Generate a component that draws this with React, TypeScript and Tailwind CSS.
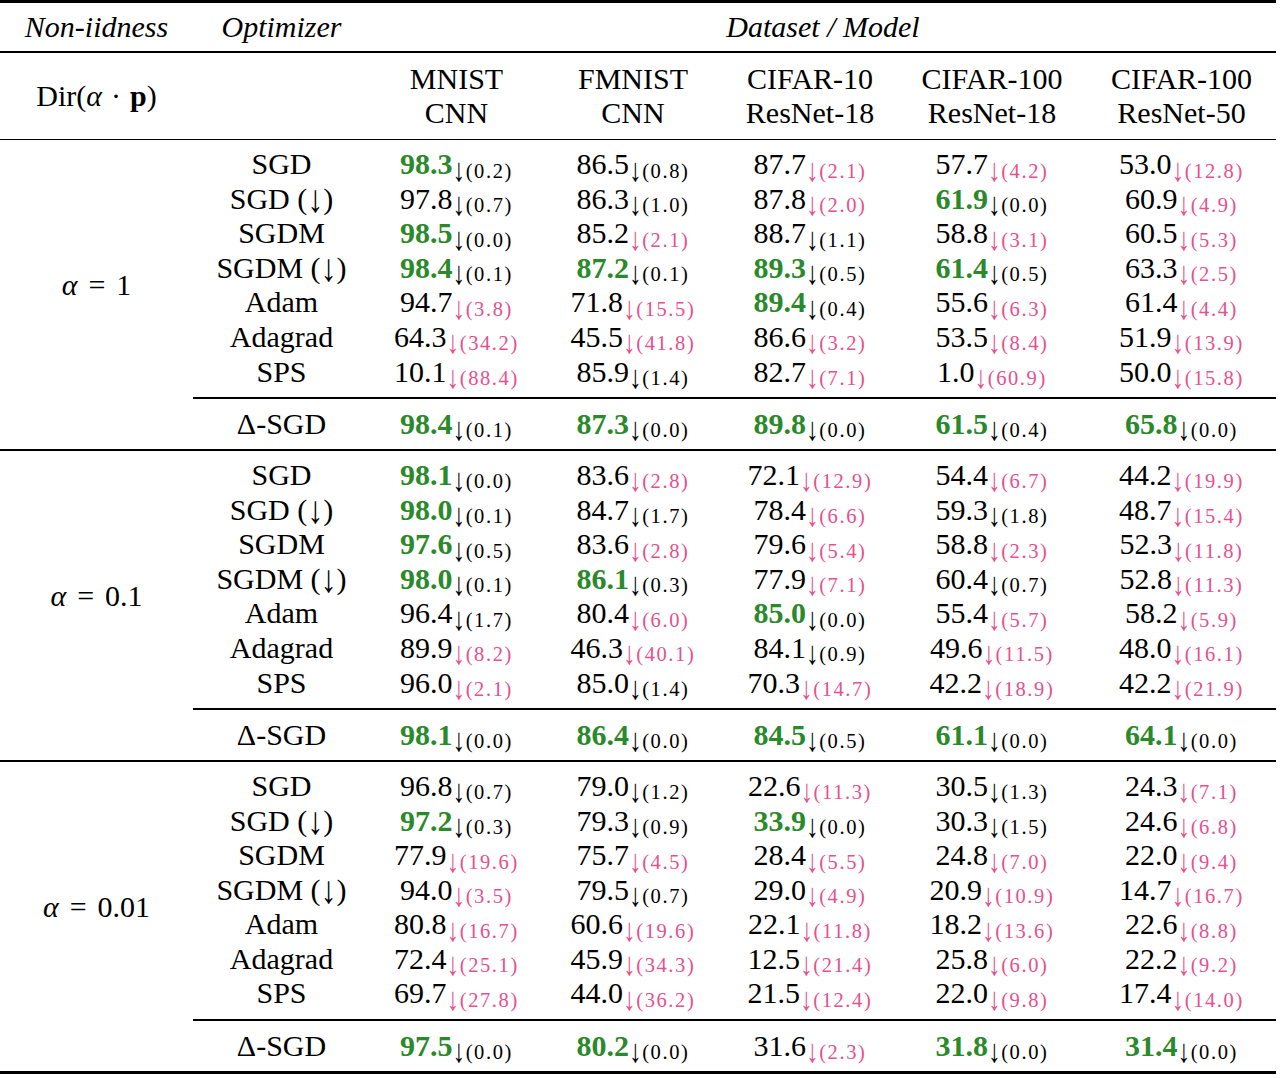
import React from 'react';

type Cell = [string, string, boolean?];

interface Section {
  label: React.ReactNode;
  rows: { name: React.ReactNode; cells: Cell[] }[];
  delta: Cell[];
}

// tall arrow like the math-mode \downarrow, kept out of the line box
const Arrow = ({ className }: { className: string }) => (
  <span className={`inline-block leading-[0] ${className}`}>↓</span>
);

const down = (
  <span>
    (<Arrow className="text-[32px] scale-y-[1.2] relative top-[1px]" />)
  </span>
);

const optimizers: React.ReactNode[] = [
  'SGD',
  <>SGD {down}</>,
  'SGDM',
  <>SGDM {down}</>,
  'Adam',
  'Adagrad',
  'SPS',
];

const alpha = (v: string) => (
  <>
    <i>α</i>
    <span className="mx-[11px]">=</span>
    {v}
  </>
);

const sections: Section[] = [
  {
    label: alpha('1'),
    rows: [
      [['98.3', '0.2', true], ['86.5', '0.8'], ['87.7', '2.1'], ['57.7', '4.2'], ['53.0', '12.8']],
      [['97.8', '0.7'], ['86.3', '1.0'], ['87.8', '2.0'], ['61.9', '0.0', true], ['60.9', '4.9']],
      [['98.5', '0.0', true], ['85.2', '2.1'], ['88.7', '1.1'], ['58.8', '3.1'], ['60.5', '5.3']],
      [['98.4', '0.1', true], ['87.2', '0.1', true], ['89.3', '0.5', true], ['61.4', '0.5', true], ['63.3', '2.5']],
      [['94.7', '3.8'], ['71.8', '15.5'], ['89.4', '0.4', true], ['55.6', '6.3'], ['61.4', '4.4']],
      [['64.3', '34.2'], ['45.5', '41.8'], ['86.6', '3.2'], ['53.5', '8.4'], ['51.9', '13.9']],
      [['10.1', '88.4'], ['85.9', '1.4'], ['82.7', '7.1'], ['1.0', '60.9'], ['50.0', '15.8']],
    ].map((cells, i) => ({ name: optimizers[i], cells: cells as Cell[] })),
    delta: [['98.4', '0.1', true], ['87.3', '0.0', true], ['89.8', '0.0', true], ['61.5', '0.4', true], ['65.8', '0.0', true]],
  },
  {
    label: alpha('0.1'),
    rows: [
      [['98.1', '0.0', true], ['83.6', '2.8'], ['72.1', '12.9'], ['54.4', '6.7'], ['44.2', '19.9']],
      [['98.0', '0.1', true], ['84.7', '1.7'], ['78.4', '6.6'], ['59.3', '1.8'], ['48.7', '15.4']],
      [['97.6', '0.5', true], ['83.6', '2.8'], ['79.6', '5.4'], ['58.8', '2.3'], ['52.3', '11.8']],
      [['98.0', '0.1', true], ['86.1', '0.3', true], ['77.9', '7.1'], ['60.4', '0.7'], ['52.8', '11.3']],
      [['96.4', '1.7'], ['80.4', '6.0'], ['85.0', '0.0', true], ['55.4', '5.7'], ['58.2', '5.9']],
      [['89.9', '8.2'], ['46.3', '40.1'], ['84.1', '0.9'], ['49.6', '11.5'], ['48.0', '16.1']],
      [['96.0', '2.1'], ['85.0', '1.4'], ['70.3', '14.7'], ['42.2', '18.9'], ['42.2', '21.9']],
    ].map((cells, i) => ({ name: optimizers[i], cells: cells as Cell[] })),
    delta: [['98.1', '0.0', true], ['86.4', '0.0', true], ['84.5', '0.5', true], ['61.1', '0.0', true], ['64.1', '0.0', true]],
  },
  {
    label: alpha('0.01'),
    rows: [
      [['96.8', '0.7'], ['79.0', '1.2'], ['22.6', '11.3'], ['30.5', '1.3'], ['24.3', '7.1']],
      [['97.2', '0.3', true], ['79.3', '0.9'], ['33.9', '0.0', true], ['30.3', '1.5'], ['24.6', '6.8']],
      [['77.9', '19.6'], ['75.7', '4.5'], ['28.4', '5.5'], ['24.8', '7.0'], ['22.0', '9.4']],
      [['94.0', '3.5'], ['79.5', '0.7'], ['29.0', '4.9'], ['20.9', '10.9'], ['14.7', '16.7']],
      [['80.8', '16.7'], ['60.6', '19.6'], ['22.1', '11.8'], ['18.2', '13.6'], ['22.6', '8.8']],
      [['72.4', '25.1'], ['45.9', '34.3'], ['12.5', '21.4'], ['25.8', '6.0'], ['22.2', '9.2']],
      [['69.7', '27.8'], ['44.0', '36.2'], ['21.5', '12.4'], ['22.0', '9.8'], ['17.4', '14.0']],
    ].map((cells, i) => ({ name: optimizers[i], cells: cells as Cell[] })),
    delta: [['97.5', '0.0', true], ['80.2', '0.0', true], ['31.6', '2.3'], ['31.8', '0.0', true], ['31.4', '0.0', true]],
  },
];

const colW = ['w-[173px]', 'w-[180px]', 'w-[174px]', 'w-[190px]', 'w-[189px]'];

const Value = ({ cell }: { cell: Cell }) => {
  const [val, drop, best] = cell;
  const pink = parseFloat(drop) >= 2.0;
  return (
    <span className="whitespace-nowrap">
      <span className={best ? 'font-bold text-[#2a8a2a]' : ''}>{val}</span>
      <span className={`relative top-[3.5px] text-[20.5px] leading-[0] tracking-[1.6px] ${pink ? 'text-[#e6508e]' : 'text-black'}`}>
        <Arrow className="text-[25px] scale-y-[1.3] relative top-[1px] -mr-[1px]" />({drop})
      </span>
    </span>
  );
};

const DataRow = ({ name, cells, h }: { name: React.ReactNode; cells: Cell[]; h: string }) => (
  <div className={`flex items-center ${h}`}>
    <div className="w-[177px] text-center whitespace-nowrap">{name}</div>
    {cells.map((c, i) => (
      <div key={i} className={`${colW[i]} text-center`}>
        <Value cell={c} />
      </div>
    ))}
  </div>
);

export default function App() {
  return (
    <div className="w-[1280px] h-[1078px] bg-white text-black font-['Liberation_Serif',serif] text-[30px] leading-[34.6px]">
      <div className="w-[1276px]">
        <div className="h-[3px] bg-black" />
        <div className="flex items-center h-[48px]">
          <div className="w-[193px] text-center italic">Non-iidness</div>
          <div className="w-[177px] text-center italic">Optimizer</div>
          <div className="flex-1 text-center italic">Dataset / Model</div>
        </div>
        <div className="h-[1.5px] bg-black" />
        <div className="flex items-center h-[86px] leading-[34px]">
          <div className="w-[193px] text-center whitespace-nowrap">
            Dir(<i>α</i>
            <span className="mx-[9px]">·</span>
            <b>p</b>)
          </div>
          <div className="w-[177px]" />
          {[
            ['MNIST', 'CNN'],
            ['FMNIST', 'CNN'],
            ['CIFAR-10', 'ResNet-18'],
            ['CIFAR-100', 'ResNet-18'],
            ['CIFAR-100', 'ResNet-50'],
          ].map(([d, m], i) => (
            <div key={i} className={`${colW[i]} text-center flex flex-col`}>
              <span>{d}</span>
              <span>{m}</span>
            </div>
          ))}
        </div>
        {sections.map((s, si) => (
          <div key={si}>
            <div className="h-[1.5px] bg-black" />
            <div className="flex">
              <div className="w-[193px] pt-[7px]">
                <div className="h-[276.8px] flex items-center justify-center whitespace-nowrap">{s.label}</div>
              </div>
              <div className="flex-1 flex flex-col">
                <div className="pt-[7px] pb-[8.3px] flex flex-col">
                  {s.rows.map((r, ri) => (
                    <DataRow key={ri} name={r.name} cells={r.cells} h="h-[34.6px]" />
                  ))}
                </div>
                <div className="h-[1.5px] bg-black" />
                <DataRow name={<>Δ-SGD</>} cells={s.delta} h="h-[50.5px]" />
              </div>
            </div>
          </div>
        ))}
        <div className="h-[3px] bg-black" />
      </div>
    </div>
  );
}
